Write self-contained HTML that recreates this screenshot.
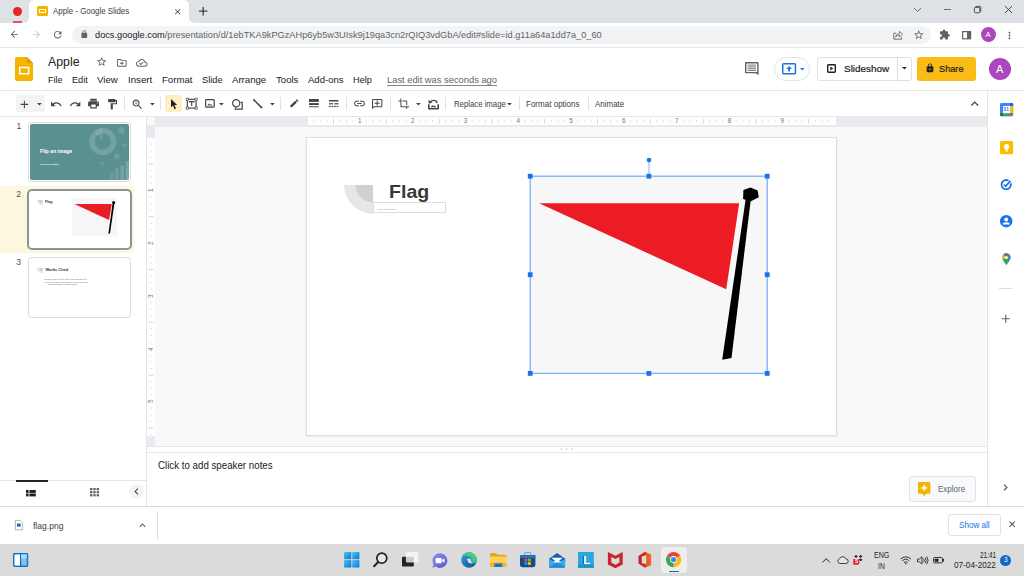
<!DOCTYPE html>
<html><head><meta charset="utf-8"><title>Apple - Google Slides</title>
<style>
*{box-sizing:border-box;margin:0;padding:0}
html,body{width:1024px;height:576px;overflow:hidden;background:#fff;font-family:"Liberation Sans",sans-serif;color:#202124}
.a{position:absolute}
.t{position:absolute;white-space:nowrap;line-height:1}
svg{position:absolute;overflow:visible}
</style></head><body>
<!-- browser tab strip -->
<div class="a" style="left:0px;top:0px;width:1024px;height:23px;background:#dee1e6;"></div>
<svg style="left:0px;top:0px;" width="1024" height="23" viewBox="0 0 1024 23"><path d="M22.5,23 Q29,23 29,17 L29,6 Q29,0 35,0 L183,0 Q189,0 189,6 L189,17 Q189,23 195.5,23 Z" fill="#fff"/></svg>
<div class="a" style="left:12.8px;top:6.5px;width:9.4px;height:9.4px;background:#e0291c;border-radius:50%"></div>
<div class="a" style="left:13px;top:21px;width:9px;height:2px;background:#e8505b;"></div>
<div class="a" style="left:37px;top:5.8px;width:10.6px;height:10.6px;background:#f4b400;border-radius:1.6px"></div>
<div class="a" style="left:39px;top:8.7px;width:6.8px;height:4.8px;background:transparent;border:1.4px solid #fff"></div>
<div class="t" style="left:52.80px;top:7.20px;font-size:8.6px;color:#3c4043;transform:scaleX(0.9160);transform-origin:0 0;">Apple - Google Slides</div>
<svg style="left:173.2px;top:6.8px;" width="9.4" height="9.4" viewBox="0 0 24 24"><path d="M19 6.410L17.590 5 12 10.590 6.410 5 5 6.410 10.590 12 5 17.590 6.410 19 12 13.410 17.590 19 19 17.590 13.410 12z" fill="#3c4043"/></svg>
<svg style="left:199px;top:7.3px;" width="8.4" height="8.4" viewBox="0 0 8.4 8.4"><path d="M4.2,0 V8.4 M0,4.2 H8.4" stroke="#3c4043" stroke-width="1.3" fill="none"/></svg>
<svg style="left:913.7px;top:8px;" width="7" height="4" viewBox="0 0 7 4"><path d="M0,0 L3.5,3.5 L7,0" stroke="#5f6368" stroke-width="0.9" fill="none"/></svg>
<svg style="left:944px;top:9.4px;" width="7" height="1" viewBox="0 0 7 1"><path d="M0,0.5 H7" stroke="#5f6368" stroke-width="0.9"/></svg>
<svg style="left:974.4px;top:6.3px;" width="7.2" height="7.2" viewBox="0 0 7.2 7.2"><rect x="0.4" y="1.4" width="5.4" height="5.4" rx="1" stroke="#3c4043" stroke-width="0.9" fill="none"/><path d="M1.6,1.4 V1.2 Q1.6,0.4 2.4,0.4 H5.8 Q6.8,0.4 6.8,1.4 V4.8 Q6.8,5.6 6,5.6" stroke="#3c4043" stroke-width="0.9" fill="none"/></svg>
<svg style="left:1005.2px;top:6.3px;" width="7" height="7" viewBox="0 0 7 7"><path d="M0,0 L7,7 M7,0 L0,7" stroke="#3c4043" stroke-width="0.9" fill="none"/></svg>
<!-- address bar -->
<div class="a" style="left:0px;top:23px;width:1024px;height:24.5px;background:#fff;border-bottom:1px solid #e3e5e8"></div>
<svg style="left:9.2px;top:29.1px;" width="10.8" height="10.8" viewBox="0 0 24 24"><path d="M20 11H7.830l5.590-5.590L12 4l-8 8 8 8 1.410-1.410L7.830 13H20v-2z" fill="#5f6368"/></svg>
<svg style="left:30.6px;top:29.1px;" width="10.8" height="10.8" viewBox="0 0 24 24"><path d="M12 4l-1.410 1.410L16.170 11H4v2h12.170l-5.580 5.590L12 20l8-8z" fill="#c4c7cb"/></svg>
<svg style="left:51.8px;top:28.9px;" width="11.4" height="11.4" viewBox="0 0 24 24"><path d="M17.650 6.350C16.200 4.900 14.210 4 12 4c-4.420 0-7.990 3.580-7.990 8s3.570 8 7.990 8c3.730 0 6.840-2.550 7.730-6h-2.080c-.820 2.330-3.040 4-5.650 4-3.310 0-6-2.690-6-6s2.690-6 6-6c1.660 0 3.140.690 4.220 1.780L13 11h7V4l-2.350 2.350z" fill="#5f6368"/></svg>
<div class="a" style="left:72px;top:26px;width:858.5px;height:18px;background:#f1f3f4;border-radius:9px"></div>
<svg style="left:79.7px;top:30.3px;" width="8.6" height="8.6" viewBox="0 0 24 24"><path d="M18 8h-1V6c0-2.760-2.240-5-5-5S7 3.240 7 6v2H6c-1.100 0-2 .900-2 2v10c0 1.100.900 2 2 2h12c1.100 0 2-.900 2-2V10c0-1.100-.900-2-2-2zm-2.900 0H8.900V6c0-1.710 1.390-3.100 3.100-3.100 1.710 0 3.100 1.390 3.100 3.100v2z" fill="#5f6368"/></svg>
<div class="t" style="left:94.60px;top:30.11px;font-size:9.8px;color:#202124;transform:scaleX(0.9415);transform-origin:0 0;">docs.google.com<span style="color:#5f6368">/presentation/d/1ebTKA9kPGzAHp6yb5w3UIsk9j19qa3cn2rQIQ3vdGbA/edit#slide=id.g11a64a1dd7a_0_60</span></div>
<svg style="left:892.5px;top:30px;" width="10" height="10" viewBox="0 0 10 10"><path d="M3.2,3.2 H0.8 V9.2 H8.4 V7" stroke="#5f6368" stroke-width="0.9" fill="none"/><path d="M2.6,7.2 Q3,3.6 6.4,3.4 V1.4 L9.6,4.2 L6.4,7 V5 Q4,5 2.6,7.2 Z" stroke="#5f6368" stroke-width="0.8" fill="none" stroke-linejoin="round"/></svg>
<svg style="left:912.7px;top:29.2px;" width="11.6" height="11.6" viewBox="0 0 24 24"><path d="M22 9.24l-7.19-.62L12 2 9.190 8.630 2 9.24l5.46 4.73L5.820 21 12 17.27 18.180 21l-1.63-7.03L22 9.240zM12 15.4l-3.760 2.270 1-4.28-3.32-2.88 4.38-.38L12 6.100l1.710 4.040 4.380.380-3.320 2.880 1 4.280L12 15.400z" fill="#5f6368"/></svg>
<svg style="left:939.3px;top:29.3px;" width="11.4" height="11.4" viewBox="0 0 24 24"><path d="M20.500 11H19V7c0-1.100-.900-2-2-2h-4V3.500C13 2.120 11.880 1 10.500 1S8 2.120 8 3.500V5H4c-1.100 0-1.990.900-1.990 2v3.800H3.500c1.490 0 2.700 1.210 2.700 2.700s-1.210 2.700-2.700 2.700H2V20c0 1.100.900 2 2 2h3.800v-1.500c0-1.490 1.210-2.700 2.700-2.700 1.490 0 2.700 1.210 2.700 2.700V22H17c1.100 0 2-.900 2-2v-4h1.500c1.380 0 2.500-1.120 2.500-2.500S21.880 11 20.500 11z" fill="#5f6368"/></svg>
<svg style="left:961.8px;top:30.8px;" width="9.2" height="8.4" viewBox="0 0 9.2 8.4"><rect x="0.6" y="0.6" width="8" height="7.2" stroke="#5f6368" stroke-width="1.2" fill="none"/><rect x="5" y="0.6" width="3.6" height="7.2" fill="#5f6368"/></svg>
<div class="a" style="left:980.8px;top:27.1px;width:15px;height:15px;background:#ab47bc;border-radius:50%"></div>
<div class="t" style="left:985.60px;top:30.89px;font-size:7.8px;color:#fff;">A</div>
<svg style="left:1003.9px;top:29.5px;" width="11" height="11" viewBox="0 0 24 24"><path d="M12 8c1.100 0 2-.900 2-2s-.900-2-2-2-2 .900-2 2 .900 2 2 2zm0 2c-1.100 0-2 .900-2 2s.900 2 2 2 2-.900 2-2-.900-2-2-2zm0 6c-1.100 0-2 .900-2 2s.900 2 2 2 2-.900 2-2-.900-2-2-2z" fill="#5f6368"/></svg>
<!-- slides header -->
<div class="a" style="left:0px;top:48px;width:1024px;height:43px;background:#fff;border-bottom:1px solid #e3e5e8"></div>
<svg style="left:15px;top:56.7px;" width="18" height="24" viewBox="0 0 18 24"><path d="M1.8,0 H12 L18,6 V22.2 Q18,24 16.2,24 H1.8 Q0,24 0,22.2 V1.8 Q0,0 1.8,0 Z" fill="#f4b400"/><path d="M12,0 L18,6 H13.5 Q12,6 12,4.5 Z" fill="#e09e00"/><rect x="4.7" y="10.5" width="9" height="6.2" fill="none" stroke="#fff" stroke-width="1.5"/></svg>
<div class="t" style="left:48.30px;top:55.35px;font-size:13.2px;color:#202124;transform:scaleX(0.9330);transform-origin:0 0;">Apple</div>
<svg style="left:96.1px;top:56.4px;" width="11.4" height="11.4" viewBox="0 0 24 24"><path d="M22 9.24l-7.19-.62L12 2 9.190 8.630 2 9.24l5.46 4.73L5.820 21 12 17.27 18.180 21l-1.63-7.03L22 9.240zM12 15.4l-3.760 2.270 1-4.28-3.32-2.88 4.38-.38L12 6.100l1.710 4.040 4.380.380-3.320 2.880 1 4.280L12 15.400z" fill="#5f6368"/></svg>
<svg style="left:116.0px;top:56.6px;" width="11.6" height="11.6" viewBox="0 0 24 24"><path d="M20 6h-8l-2-2H4c-1.100 0-2 .900-2 2v12c0 1.100.900 2 2 2h16c1.100 0 2-.900 2-2V8c0-1.100-.900-2-2-2zm0 12H4V6h5.170l2 2H20v10zm-8-1l4-4-4-4v3H8v2h4z" fill="#5f6368"/></svg>
<svg style="left:136.3px;top:56.7px;" width="11.6" height="11.6" viewBox="0 0 24 24"><path d="M19.350 10.040C18.670 6.590 15.640 4 12 4 9.110 4 6.600 5.640 5.350 8.040 2.340 8.360 0 10.910 0 14c0 3.310 2.690 6 6 6h13c2.760 0 5-2.240 5-5 0-2.640-2.050-4.780-4.650-4.960zM19 18H6c-2.210 0-4-1.790-4-4s1.790-4 4-4h.710C7.370 7.690 9.480 6 12 6c3.040 0 5.500 2.460 5.500 5.500v.500H19c1.660 0 3 1.340 3 3s-1.340 3-3 3zm-9-3.820l-2.090-2.090L6.500 13.500 10 17l6.010-6.010-1.410-1.410z" fill="#5f6368"/></svg>
<div class="t" style="left:47.80px;top:75.41px;font-size:9.8px;color:#202124;transform:scaleX(0.9119);transform-origin:0 0;">File</div>
<div class="t" style="left:72.20px;top:75.41px;font-size:9.8px;color:#202124;transform:scaleX(0.9356);transform-origin:0 0;">Edit</div>
<div class="t" style="left:97.40px;top:75.41px;font-size:9.8px;color:#202124;transform:scaleX(0.9874);transform-origin:0 0;">View</div>
<div class="t" style="left:127.70px;top:75.41px;font-size:9.8px;color:#202124;transform:scaleX(0.9914);transform-origin:0 0;">Insert</div>
<div class="t" style="left:161.80px;top:75.41px;font-size:9.8px;color:#202124;transform:scaleX(0.9795);transform-origin:0 0;">Format</div>
<div class="t" style="left:201.60px;top:75.41px;font-size:9.8px;color:#202124;transform:scaleX(0.9453);transform-origin:0 0;">Slide</div>
<div class="t" style="left:231.80px;top:75.41px;font-size:9.8px;color:#202124;transform:scaleX(0.9809);transform-origin:0 0;">Arrange</div>
<div class="t" style="left:275.60px;top:75.41px;font-size:9.8px;color:#202124;transform:scaleX(0.9791);transform-origin:0 0;">Tools</div>
<div class="t" style="left:307.60px;top:75.41px;font-size:9.8px;color:#202124;transform:scaleX(0.9753);transform-origin:0 0;">Add-ons</div>
<div class="t" style="left:352.80px;top:75.41px;font-size:9.8px;color:#202124;transform:scaleX(0.9427);transform-origin:0 0;">Help</div>
<div class="t" style="left:386.60px;top:75.41px;font-size:9.8px;color:#5f6368;transform:scaleX(0.9524);transform-origin:0 0;text-decoration:underline;text-decoration-thickness:0.6px;text-decoration-color:#80868b;text-underline-offset:1.5px">Last edit was seconds ago</div>
<svg style="left:745.2px;top:61.6px;" width="13.6" height="13" viewBox="0 0 13.6 13"><path d="M0.7,0.7 H12.9 V10.6 H0.7 Z" fill="#fff" stroke="#5f6368" stroke-width="1.4" stroke-linejoin="round"/><path d="M10.4,11 H13.6 V13 Z" fill="#5f6368"/><path d="M2.6,3.1 H11 M2.6,4.9 H11 M2.6,6.7 H11 M2.6,8.4 H11" stroke="#6f7377" stroke-width="0.95"/></svg>
<div class="a" style="left:774.2px;top:57.2px;width:35.6px;height:23.4px;background:#fff;border:1px solid #e0e3e7;border-radius:12px"></div>
<svg style="left:781.7px;top:63.2px;" width="14.2" height="11.4" viewBox="0 0 14.2 11.4"><rect x="0.75" y="0.75" width="12.7" height="9.9" rx="0.9" stroke="#1a73e8" stroke-width="1.5" fill="none"/><path d="M7.1,2.9 L10,6 H8 V8.4 H6.2 V6 H4.2 Z" fill="#1a73e8"/></svg>
<svg style="left:800px;top:67.8px;" width="4.8" height="2.7" viewBox="0 0 4.8 2.7"><path d="M0,0 H4.6 L2.3,2.6 Z" fill="#1a73e8"/></svg>
<div class="a" style="left:817.4px;top:57.2px;width:94.6px;height:23.4px;background:#fff;border:1px solid #dfe1e5;border-radius:3px"></div>
<div class="a" style="left:897px;top:57.2px;width:1px;height:23.4px;background:#dadce0;"></div>
<svg style="left:827.2px;top:63.7px;" width="9" height="9" viewBox="0 0 9 9"><rect x="0.7" y="0.7" width="7.6" height="7.6" rx="0.7" stroke="#202124" stroke-width="1.4" fill="none"/><path d="M3.3,2.6 L6.3,4.5 L3.3,6.4 Z" fill="#202124"/></svg>
<div class="t" style="left:844.40px;top:63.66px;font-size:9.9px;color:#202124;transform:scaleX(1.0060);transform-origin:0 0;-webkit-text-stroke:0.2px #202124">Slideshow</div>
<svg style="left:901.8px;top:67.4px;" width="4.8" height="2.6" viewBox="0 0 4.8 2.6"><path d="M0,0 H4.8 L2.4,2.6 Z" fill="#202124"/></svg>
<div class="a" style="left:917.4px;top:57.2px;width:58.8px;height:23.4px;background:#f9bb16;border-radius:3px"></div>
<svg style="left:925.0px;top:63.0px;" width="10" height="10" viewBox="0 0 24 24"><path d="M18 8h-1V6c0-2.760-2.240-5-5-5S7 3.240 7 6v2H6c-1.100 0-2 .900-2 2v10c0 1.100.900 2 2 2h12c1.100 0 2-.900 2-2V10c0-1.100-.900-2-2-2zm-6 9c-1.100 0-2-.900-2-2s.900-2 2-2 2 .900 2 2-.900 2-2 2zm3.100-9H8.900V6c0-1.710 1.390-3.100 3.100-3.100 1.710 0 3.100 1.390 3.100 3.100v2z" fill="#202124"/></svg>
<div class="t" style="left:939.40px;top:63.66px;font-size:9.9px;color:#202124;transform:scaleX(0.9311);transform-origin:0 0;-webkit-text-stroke:0.2px #202124">Share</div>
<div class="a" style="left:988.7px;top:58.3px;width:22px;height:22px;background:#ab47bc;border-radius:50%"></div>
<div class="t" style="left:995.90px;top:64.03px;font-size:11px;color:#fff;">A</div>
<!-- toolbar -->
<div class="a" style="left:0px;top:91px;width:987px;height:26px;background:#fff;border-bottom:1px solid #e6e8ea"></div>
<div class="a" style="left:15.6px;top:94.8px;width:29.4px;height:17px;background:#f1f3f4;border-radius:2px"></div>
<svg style="left:18.2px;top:97.5px;" width="12.8" height="12.8" viewBox="0 0 24 24"><path d="M19 13h-6v6h-2v-6H5v-2h6V5h2v6h6v2z" fill="#444746"/></svg>
<svg style="left:37.1px;top:102.7px;" width="4.8" height="2.6" viewBox="0 0 4.8 2.6"><path d="M0,0 H4.8 L2.4,2.6 Z" fill="#444746"/></svg>
<svg style="left:49.7px;top:97.8px;" width="12.4" height="12.4" viewBox="0 0 24 24"><path d="M12.5 8c-2.65 0-5.05.99-6.9 2.6L2 7v9h9l-3.62-3.62c1.39-1.16 3.16-1.88 5.12-1.88 3.54 0 6.55 2.31 7.6 5.5l2.37-.78C21.08 11.03 17.15 8 12.5 8z" fill="#444746"/></svg>
<svg style="left:69.0px;top:97.8px;" width="12.4" height="12.4" viewBox="0 0 24 24"><path d="M18.4 10.6C16.55 8.99 14.15 8 11.5 8c-4.65 0-8.58 3.03-9.96 7.22L3.9 16c1.05-3.19 4.05-5.5 7.6-5.5 1.95 0 3.73.72 5.12 1.88L13 16h9V7l-3.6 3.6z" fill="#444746"/></svg>
<svg style="left:87.0px;top:97.2px;" width="13" height="13" viewBox="0 0 24 24"><path d="M19 8H5c-1.66 0-3 1.34-3 3v6h4v4h12v-4h4v-6c0-1.66-1.34-3-3-3zm-3 11H8v-5h8v5zm3-7c-.55 0-1-.45-1-1s.45-1 1-1 1 .45 1 1-.45 1-1 1zm-1-9H6v4h12V3z" fill="#444746"/></svg>
<svg style="left:106.1px;top:97.6px;" width="12.6" height="12.6" viewBox="0 0 24 24"><path d="M18 4V3c0-.55-.45-1-1-1H5c-.55 0-1 .45-1 1v4c0 .55.45 1 1 1h12c.55 0 1-.45 1-1V6h1v4H9v11c0 .55.45 1 1 1h2c.55 0 1-.45 1-1v-9h8V4h-3z" fill="#444746"/></svg>
<div class="a" style="left:123.9px;top:97.4px;width:1px;height:12.6px;background:#dfe1e5;"></div>
<svg style="left:130.8px;top:97.7px;" width="12.8" height="12.8" viewBox="0 0 24 24"><path d="M15.5 14h-.79l-.28-.27C15.41 12.59 16 11.11 16 9.5 16 5.91 13.09 3 9.5 3S3 5.91 3 9.5 5.91 16 9.5 16c1.61 0 3.09-.59 4.23-1.57l.27.28v.79l5 4.99L20.49 19l-4.99-5zm-6 0C7.01 14 5 11.99 5 9.5S7.01 5 9.5 5 14 7.01 14 9.5 11.99 14 9.5 14zm2.500-4h-2v2H9v-2H7V9h2V7h1v2h2v1z" fill="#444746"/></svg>
<svg style="left:149.6px;top:102.7px;" width="4.8" height="2.6" viewBox="0 0 4.8 2.6"><path d="M0,0 H4.8 L2.4,2.6 Z" fill="#444746"/></svg>
<div class="a" style="left:160.2px;top:97.4px;width:1px;height:12.6px;background:#dfe1e5;"></div>
<div class="a" style="left:165px;top:94.8px;width:17.2px;height:17px;background:#feefc3;border-radius:2px"></div>
<svg style="left:170.6px;top:98.9px;" width="6.6" height="10.4" viewBox="0 0 6.6 10.4"><path d="M0,0 V8.4 L2,6.6 L3.5,10.2 L5,9.6 L3.5,6.1 H6.2 Z" fill="#202124"/></svg>
<svg style="left:186.4px;top:98.30000000000001px;" width="11.4" height="11.4" viewBox="0 0 11.4 11.4"><rect x="1.3" y="1.3" width="8.8" height="8.800" stroke="#444746" stroke-width="1.15" fill="none"/><rect x="0.2" y="0.2" width="2.2" height="2.2" fill="#fff" stroke="#444746" stroke-width="0.7"/><rect x="9" y="0.2" width="2.2" height="2.2" fill="#fff" stroke="#444746" stroke-width="0.7"/><rect x="0.2" y="9" width="2.2" height="2.2" fill="#fff" stroke="#444746" stroke-width="0.7"/><rect x="9" y="9" width="2.2" height="2.2" fill="#fff" stroke="#444746" stroke-width="0.7"/><path d="M3.5,4.6 V3.6 H7.9 V4.6 M5.7,3.6 V8" stroke="#444746" stroke-width="1.15" fill="none"/></svg>
<svg style="left:205.4px;top:99.4px;" width="9.8" height="8.8" viewBox="0 0 9.8 8.8"><rect x="0.6" y="0.6" width="8.6" height="7.6" rx="0.9" stroke="#444746" stroke-width="1.2" fill="none"/><path d="M2.2,6.6 L3.9,4.5 L5.1,5.9 L6,5 L7.6,6.6 Z" fill="#444746"/></svg>
<svg style="left:219.0px;top:102.7px;" width="4.8" height="2.6" viewBox="0 0 4.8 2.6"><path d="M0,0 H4.8 L2.4,2.6 Z" fill="#444746"/></svg>
<svg style="left:231.6px;top:98.5px;" width="10.8" height="10.8" viewBox="0 0 10.8 10.8"><circle cx="4.2" cy="4.2" r="3.6" stroke="#444746" stroke-width="1.2" fill="none"/><path d="M8.6,3.4 H10.2 V10.2 H3.4 V8.6" stroke="#444746" stroke-width="1.2" fill="none"/></svg>
<svg style="left:252.6px;top:99.2px;" width="9.4" height="9.4" viewBox="0 0 9.4 9.4"><path d="M1,1 L8.4,8.4" stroke="#444746" stroke-width="1.5"/><circle cx="1" cy="1" r="1" fill="#444746"/><circle cx="8.4" cy="8.4" r="1" fill="#444746"/></svg>
<svg style="left:269.8px;top:102.7px;" width="4.8" height="2.6" viewBox="0 0 4.8 2.6"><path d="M0,0 H4.8 L2.4,2.6 Z" fill="#444746"/></svg>
<div class="a" style="left:280.3px;top:97.4px;width:1px;height:12.6px;background:#dfe1e5;"></div>
<svg style="left:289.1px;top:97.7px;" width="10.6" height="10.6" viewBox="0 0 24 24"><path d="M3 17.25V21h3.75L17.81 9.94l-3.75-3.75L3 17.25zM20.71 7.04c.39-.39.39-1.02 0-1.41l-2.34-2.34c-.39-.39-1.02-.39-1.41 0l-1.83 1.83 3.75 3.75 1.83-1.830z" fill="#444746"/></svg>
<svg style="left:309px;top:99.4px;" width="9.8" height="8.4" viewBox="0 0 9.8 8.4"><rect x="0" y="0" width="9.8" height="2.9" fill="#444746"/><rect x="0" y="4.1" width="9.8" height="1.9" fill="#444746"/><rect x="0" y="7.3" width="9.8" height="1" fill="#444746"/></svg>
<svg style="left:328.7px;top:99.9px;" width="9.4" height="7.2" viewBox="0 0 9.4 7.2"><rect x="0" y="0" width="9.4" height="1.5" fill="#444746"/><rect x="0" y="3.2" width="4" height="1.2" fill="#444746"/><rect x="5.4" y="3.2" width="4" height="1.2" fill="#444746"/><rect x="0" y="5.9" width="1.7" height="1.2" fill="#444746"/><rect x="2.55" y="5.9" width="1.7" height="1.2" fill="#444746"/><rect x="5.1" y="5.9" width="1.7" height="1.2" fill="#444746"/><rect x="7.65" y="5.9" width="1.7" height="1.2" fill="#444746"/></svg>
<div class="a" style="left:346.1px;top:97.4px;width:1px;height:12.6px;background:#dfe1e5;"></div>
<svg style="left:352.6px;top:97.4px;" width="13" height="13" viewBox="0 0 24 24"><path d="M3.9 12c0-1.71 1.39-3.1 3.1-3.1h4V7H7c-2.76 0-5 2.24-5 5s2.24 5 5 5h4v-1.900H7c-1.71 0-3.1-1.39-3.1-3.1zM8 13h8v-2H8v2zm9-6h-4v1.9h4c1.71 0 3.1 1.39 3.1 3.1s-1.39 3.1-3.1 3.100h-4V17h4c2.76 0 5-2.24 5-5s-2.24-5-5-5z" fill="#444746"/></svg>
<svg style="left:371.4px;top:98.0px;" width="12.4" height="12.4" viewBox="0 0 24 24"><path d="M22 4c0-1.100-.900-2-2-2H4c-1.100 0-2 .900-2 2v12c0 1.100.900 2 2 2h14l4 4V4zm-2 13.170L18.830 16H4V4h16v13.170zM13 5h-2v4H7v2h4v4h2v-4h4V9h-4z" fill="#444746" transform="translate(24,0) scale(-1,1)"/></svg>
<div class="a" style="left:390.3px;top:97.4px;width:1px;height:12.6px;background:#dfe1e5;"></div>
<svg style="left:397.6px;top:97.9px;" width="11.6" height="11.6" viewBox="0 0 24 24"><path d="M17 15h2V7c0-1.1-.9-2-2-2H9v2h8v8zM7 17V1H5v4H1v2h4v10c0 1.1.9 2 2 2h10v4h2v-4h4v-2H7z" fill="#444746"/></svg>
<svg style="left:415.90000000000003px;top:102.7px;" width="4.8" height="2.6" viewBox="0 0 4.8 2.6"><path d="M0,0 H4.8 L2.4,2.6 Z" fill="#444746"/></svg>
<svg style="left:428px;top:98.60000000000001px;" width="11" height="10.6" viewBox="0 0 11 10.6"><path d="M0.8,5.2 V9.8 H10.2 V5.2" stroke="#444746" stroke-width="1.6" fill="none" stroke-linejoin="round"/><path d="M2.6,8.2 L4.3,6 L5.5,7.4 L6.7,6.2 L8.4,8.2 Z" fill="#444746"/><path d="M2,3.600 A3.800,3.500 0 0 1 9.200,4" stroke="#444746" stroke-width="1.4" fill="none"/><path d="M0.2,1 L1,4.800 L4.400,3.400 Z" fill="#444746"/></svg>
<div class="a" style="left:445.1px;top:97.4px;width:1px;height:12.6px;background:#dfe1e5;"></div>
<div class="t" style="left:453.80px;top:99.80px;font-size:8.6px;color:#3c4043;transform:scaleX(0.9030);transform-origin:0 0;">Replace image</div>
<svg style="left:507.3px;top:102.7px;" width="4.8" height="2.6" viewBox="0 0 4.8 2.6"><path d="M0,0 H4.8 L2.4,2.6 Z" fill="#444746"/></svg>
<div class="a" style="left:518.9px;top:97.4px;width:1px;height:12.6px;background:#dfe1e5;"></div>
<div class="t" style="left:526.40px;top:99.80px;font-size:8.6px;color:#3c4043;transform:scaleX(0.9345);transform-origin:0 0;">Format options</div>
<div class="a" style="left:587.5px;top:97.4px;width:1px;height:12.6px;background:#dfe1e5;"></div>
<div class="t" style="left:595.00px;top:99.80px;font-size:8.6px;color:#3c4043;transform:scaleX(0.9287);transform-origin:0 0;">Animate</div>
<svg style="left:966.65px;top:95.85px;" width="15.5" height="15.5" viewBox="0 0 24 24"><path d="M12 8l-6 6 1.410 1.410L12 10.830l4.590 4.580L18 14z" fill="#444746"/></svg>
<!-- filmstrip -->
<div class="a" style="left:0px;top:117px;width:146.8px;height:389px;background:#fff;border-right:1px solid #e3e5e8"></div>
<div class="a" style="left:0px;top:186.4px;width:134px;height:66.4px;background:#fef7e0;border-radius:0 3px 3px 0"></div>
<div class="t" style="left:16.60px;top:122.40px;font-size:8.6px;color:#4d5156;">1</div>
<div class="t" style="left:16.20px;top:190.30px;font-size:8.6px;color:#4d5156;">2</div>
<div class="t" style="left:16.20px;top:258.10px;font-size:8.6px;color:#4d5156;">3</div>
<div class="a" style="left:28.2px;top:121.5px;width:102.8px;height:60px;background:#fff;border:1px solid #dadce0;border-radius:3.5px"></div>
<div class="a" style="left:30px;top:123.6px;width:99.2px;height:56px;background:#5a908f;border-radius:2px;overflow:hidden"></div>
<svg style="left:30px;top:123.6px;" width="99.2" height="56" viewBox="0 0 99.2 56"><g fill="#fff"><circle cx="72.8" cy="17.6" r="10.9" fill="none" stroke="#fff" stroke-opacity="0.16" stroke-width="5.6"/><path d="M64.4,9 A12,12 0 0 1 72.8,4 V9.6 A8.2,8.2 0 0 0 67,12 Z" fill-opacity="0.10"/><path d="M72.8,17.6 L67.6,11.6 A8,8 0 0 1 72.8,9.6 Z" fill-opacity="0.10"/><circle cx="91.6" cy="6.4" r="3.3" fill-opacity="0.13"/><circle cx="94.5" cy="21.6" r="2" fill-opacity="0.13"/><circle cx="86.9" cy="32.6" r="3" fill-opacity="0.13"/><circle cx="72.3" cy="39.4" r="1.7" fill-opacity="0.13"/><rect x="80.2" y="48.4" width="3.2" height="7.6" fill-opacity="0.13"/><rect x="85.4" y="44.4" width="3.2" height="11.6" fill-opacity="0.15"/><rect x="90.4" y="41.4" width="3.6" height="14.6" fill-opacity="0.17"/><rect x="95.6" y="37.4" width="3.6" height="18.6" fill-opacity="0.19"/></g></svg>
<div class="t" style="left:39.80px;top:148.86px;font-size:5.4px;color:#fff;transform:scaleX(0.9331);transform-origin:0 0;font-weight:700;">Flip an image</div>
<div class="t" style="left:39.80px;top:164.38px;font-size:2.5px;color:#fff;transform:scaleX(0.8600);transform-origin:0 0;font-weight:700;">Flip a/click images</div>
<div class="a" style="left:27.2px;top:188.8px;width:104.6px;height:61.3px;background:#fff;border:2px solid #8f949a;border-radius:5px"></div>
<svg style="left:37px;top:200px;" width="6" height="5.4" viewBox="0 0 6 5.4"><path d="M0,0 H5.6 V5.2 A5.6,5.2 0 0 1 0,0 Z" fill="#e4e4e4"/><path d="M2.2,0 H5.6 V3.2 A3.4,3.2 0 0 1 2.2,0 Z" fill="#cfd1d0"/></svg>
<div class="t" style="left:45.40px;top:199.59px;font-size:3.9px;color:#333;transform:scaleX(0.9480);transform-origin:0 0;font-weight:700;">Flag</div>
<div class="a" style="left:71.9px;top:198.4px;width:45px;height:37.4px;background:#f6f6f6;"></div>
<svg style="left:71.9px;top:199px;" width="45" height="37.4" viewBox="0 0 45 37.4"><path d="M2.3,5 H39.8 L37,21.1 Z" fill="#ec1c24"/><path d="M40.6,4.2 L42.4,4.2 L38,34.4 L36.4,34.5 Z" fill="#000"/><circle cx="41.6" cy="3.6" r="1.5" fill="#000"/></svg>
<div class="a" style="left:28.2px;top:257.1px;width:102.8px;height:60.6px;background:#fff;border:1px solid #dadce0;border-radius:3.5px"></div>
<svg style="left:37px;top:267.8px;" width="6" height="5.4" viewBox="0 0 6 5.4"><path d="M0,0 H5.6 V5.2 A5.6,5.2 0 0 1 0,0 Z" fill="#e4e4e4"/><path d="M2.2,0 H5.6 V3.2 A3.4,3.2 0 0 1 2.2,0 Z" fill="#cfd1d0"/></svg>
<div class="t" style="left:45.40px;top:267.69px;font-size:3.9px;color:#333;font-weight:700;">Works Cited</div>
<div class="t" style="left:43.80px;top:278.52px;font-size:1.6px;color:#666;transform:scaleX(0.9499);transform-origin:0 0;">Flag image. Image by Google, Google Slides, www.google.com.</div>
<div class="t" style="left:43.80px;top:281.82px;font-size:1.6px;color:#666;transform:scaleX(0.9201);transform-origin:0 0;">“How to Flip an Image in Google Slides.” Flip an Image Guide, 2022,</div>
<div class="t" style="left:48.40px;top:284.02px;font-size:1.6px;color:#666;transform:scaleX(1.1761);transform-origin:0 0;">www.flipanimage.xyz/google-slides.</div>
<div class="a" style="left:0px;top:480px;width:146.5px;height:1px;background:#e3e5e8;"></div>
<div class="a" style="left:16px;top:480px;width:32.2px;height:1.6px;background:#202124;"></div>
<svg style="left:26px;top:489.6px;" width="10" height="6.4" viewBox="0 0 10 6.4"><rect x="0" y="0" width="2.6" height="2.9" fill="#202124"/><rect x="3.4" y="0" width="6.4" height="2.9" fill="#202124"/><rect x="0" y="3.5" width="2.6" height="2.9" fill="#202124"/><rect x="3.4" y="3.5" width="6.4" height="2.9" fill="#202124"/></svg>
<svg style="left:90.4px;top:488.4px;" width="9" height="8.4" viewBox="0 0 9 8.4"><g fill="#5f6368"><rect x="0" y="0" width="2.4" height="2.2"/><rect x="3.3" y="0" width="2.4" height="2.2"/><rect x="6.6" y="0" width="2.4" height="2.2"/><rect x="0" y="3.1" width="2.4" height="2.2"/><rect x="3.3" y="3.1" width="2.4" height="2.2"/><rect x="6.6" y="3.1" width="2.4" height="2.2"/><rect x="0" y="6.2" width="2.4" height="2.2"/><rect x="3.3" y="6.2" width="2.4" height="2.2"/><rect x="6.6" y="6.2" width="2.4" height="2.2"/></g></svg>
<div class="a" style="left:128.8px;top:484.2px;width:15.2px;height:15.2px;background:#f1f3f4;border-radius:50%"></div>
<svg style="left:129.7px;top:485.3px;" width="13" height="13" viewBox="0 0 24 24"><path d="M15.410 7.410L14 6l-6 6 6 6 1.410-1.410L10.830 12z" fill="#444746"/></svg>
<!-- editor canvas + rulers -->
<div class="a" style="left:147px;top:117px;width:840px;height:329.4px;background:#f8f9fa;"></div>
<div class="a" style="left:155.4px;top:116.6px;width:831.6px;height:10.2px;background:#e8eaed;"></div>
<div class="a" style="left:308px;top:117.4px;width:528px;height:7.6px;background:#fff;"></div>
<div class="a" style="left:146.8px;top:117px;width:8.6px;height:329.4px;background:#e8eaed;"></div>
<div class="a" style="left:147.2px;top:117px;width:7.8px;height:7.8px;background:#f8f9fa;"></div>
<div class="a" style="left:147.2px;top:137.6px;width:8px;height:298.4px;background:#fff;"></div>
<svg style="left:0px;top:0px;" width="1024" height="576" viewBox="0 0 1024 576"><rect x="313.25" y="120" width="0.9" height="2.2" fill="#dcdee1"/><rect x="319.85" y="120" width="0.9" height="2.2" fill="#dcdee1"/><rect x="326.45" y="120" width="0.9" height="2.2" fill="#dcdee1"/><rect x="333.05" y="118.8" width="0.9" height="5" fill="#cdd0d4"/><rect x="339.65" y="120" width="0.9" height="2.2" fill="#dcdee1"/><rect x="346.25" y="120" width="0.9" height="2.2" fill="#dcdee1"/><rect x="352.85" y="120" width="0.9" height="2.2" fill="#dcdee1"/><rect x="366.05" y="120" width="0.9" height="2.2" fill="#dcdee1"/><rect x="372.65" y="120" width="0.9" height="2.2" fill="#dcdee1"/><rect x="379.25" y="120" width="0.9" height="2.2" fill="#dcdee1"/><rect x="385.85" y="118.8" width="0.9" height="5" fill="#cdd0d4"/><rect x="392.45" y="120" width="0.9" height="2.2" fill="#dcdee1"/><rect x="399.05" y="120" width="0.9" height="2.2" fill="#dcdee1"/><rect x="405.65" y="120" width="0.9" height="2.2" fill="#dcdee1"/><rect x="418.85" y="120" width="0.9" height="2.2" fill="#dcdee1"/><rect x="425.45" y="120" width="0.9" height="2.2" fill="#dcdee1"/><rect x="432.05" y="120" width="0.9" height="2.2" fill="#dcdee1"/><rect x="438.65" y="118.8" width="0.9" height="5" fill="#cdd0d4"/><rect x="445.25" y="120" width="0.9" height="2.2" fill="#dcdee1"/><rect x="451.85" y="120" width="0.9" height="2.2" fill="#dcdee1"/><rect x="458.45" y="120" width="0.9" height="2.2" fill="#dcdee1"/><rect x="471.65" y="120" width="0.9" height="2.2" fill="#dcdee1"/><rect x="478.25" y="120" width="0.9" height="2.2" fill="#dcdee1"/><rect x="484.85" y="120" width="0.9" height="2.2" fill="#dcdee1"/><rect x="491.45" y="118.8" width="0.9" height="5" fill="#cdd0d4"/><rect x="498.05" y="120" width="0.9" height="2.2" fill="#dcdee1"/><rect x="504.65" y="120" width="0.9" height="2.2" fill="#dcdee1"/><rect x="511.25" y="120" width="0.9" height="2.2" fill="#dcdee1"/><rect x="524.45" y="120" width="0.9" height="2.2" fill="#dcdee1"/><rect x="531.05" y="120" width="0.9" height="2.2" fill="#dcdee1"/><rect x="537.65" y="120" width="0.9" height="2.2" fill="#dcdee1"/><rect x="544.25" y="118.8" width="0.9" height="5" fill="#cdd0d4"/><rect x="550.85" y="120" width="0.9" height="2.2" fill="#dcdee1"/><rect x="557.45" y="120" width="0.9" height="2.2" fill="#dcdee1"/><rect x="564.05" y="120" width="0.9" height="2.2" fill="#dcdee1"/><rect x="577.25" y="120" width="0.9" height="2.2" fill="#dcdee1"/><rect x="583.85" y="120" width="0.9" height="2.2" fill="#dcdee1"/><rect x="590.45" y="120" width="0.9" height="2.2" fill="#dcdee1"/><rect x="597.05" y="118.8" width="0.9" height="5" fill="#cdd0d4"/><rect x="603.65" y="120" width="0.9" height="2.2" fill="#dcdee1"/><rect x="610.25" y="120" width="0.9" height="2.2" fill="#dcdee1"/><rect x="616.85" y="120" width="0.9" height="2.2" fill="#dcdee1"/><rect x="630.05" y="120" width="0.9" height="2.2" fill="#dcdee1"/><rect x="636.65" y="120" width="0.9" height="2.2" fill="#dcdee1"/><rect x="643.25" y="120" width="0.9" height="2.2" fill="#dcdee1"/><rect x="649.85" y="118.8" width="0.9" height="5" fill="#cdd0d4"/><rect x="656.45" y="120" width="0.9" height="2.2" fill="#dcdee1"/><rect x="663.05" y="120" width="0.9" height="2.2" fill="#dcdee1"/><rect x="669.65" y="120" width="0.9" height="2.2" fill="#dcdee1"/><rect x="682.85" y="120" width="0.9" height="2.2" fill="#dcdee1"/><rect x="689.45" y="120" width="0.9" height="2.2" fill="#dcdee1"/><rect x="696.05" y="120" width="0.9" height="2.2" fill="#dcdee1"/><rect x="702.65" y="118.8" width="0.9" height="5" fill="#cdd0d4"/><rect x="709.25" y="120" width="0.9" height="2.2" fill="#dcdee1"/><rect x="715.85" y="120" width="0.9" height="2.2" fill="#dcdee1"/><rect x="722.45" y="120" width="0.9" height="2.2" fill="#dcdee1"/><rect x="735.65" y="120" width="0.9" height="2.2" fill="#dcdee1"/><rect x="742.25" y="120" width="0.9" height="2.2" fill="#dcdee1"/><rect x="748.85" y="120" width="0.9" height="2.2" fill="#dcdee1"/><rect x="755.45" y="118.8" width="0.9" height="5" fill="#cdd0d4"/><rect x="762.05" y="120" width="0.9" height="2.2" fill="#dcdee1"/><rect x="768.65" y="120" width="0.9" height="2.2" fill="#dcdee1"/><rect x="775.25" y="120" width="0.9" height="2.2" fill="#dcdee1"/><rect x="788.45" y="120" width="0.9" height="2.2" fill="#dcdee1"/><rect x="795.05" y="120" width="0.9" height="2.2" fill="#dcdee1"/><rect x="801.65" y="120" width="0.9" height="2.2" fill="#dcdee1"/><rect x="808.25" y="118.8" width="0.9" height="5" fill="#cdd0d4"/><rect x="814.85" y="120" width="0.9" height="2.2" fill="#dcdee1"/><rect x="821.45" y="120" width="0.9" height="2.2" fill="#dcdee1"/><rect x="828.05" y="120" width="0.9" height="2.2" fill="#dcdee1"/><rect x="150" y="143.65" width="2.2" height="0.9" fill="#dcdee1"/><rect x="150" y="150.25" width="2.2" height="0.9" fill="#dcdee1"/><rect x="150" y="156.85" width="2.2" height="0.9" fill="#dcdee1"/><rect x="148.6" y="163.45" width="5" height="0.9" fill="#cdd0d4"/><rect x="150" y="170.05" width="2.2" height="0.9" fill="#dcdee1"/><rect x="150" y="176.65" width="2.2" height="0.9" fill="#dcdee1"/><rect x="150" y="183.25" width="2.2" height="0.9" fill="#dcdee1"/><rect x="150" y="196.45" width="2.2" height="0.9" fill="#dcdee1"/><rect x="150" y="203.05" width="2.2" height="0.9" fill="#dcdee1"/><rect x="150" y="209.65" width="2.2" height="0.9" fill="#dcdee1"/><rect x="148.6" y="216.25" width="5" height="0.9" fill="#cdd0d4"/><rect x="150" y="222.85" width="2.2" height="0.9" fill="#dcdee1"/><rect x="150" y="229.45" width="2.2" height="0.9" fill="#dcdee1"/><rect x="150" y="236.05" width="2.2" height="0.9" fill="#dcdee1"/><rect x="150" y="249.25" width="2.2" height="0.9" fill="#dcdee1"/><rect x="150" y="255.85" width="2.2" height="0.9" fill="#dcdee1"/><rect x="150" y="262.45" width="2.2" height="0.9" fill="#dcdee1"/><rect x="148.6" y="269.05" width="5" height="0.9" fill="#cdd0d4"/><rect x="150" y="275.65" width="2.2" height="0.9" fill="#dcdee1"/><rect x="150" y="282.25" width="2.2" height="0.9" fill="#dcdee1"/><rect x="150" y="288.85" width="2.2" height="0.9" fill="#dcdee1"/><rect x="150" y="302.05" width="2.2" height="0.9" fill="#dcdee1"/><rect x="150" y="308.65" width="2.2" height="0.9" fill="#dcdee1"/><rect x="150" y="315.25" width="2.2" height="0.9" fill="#dcdee1"/><rect x="148.6" y="321.85" width="5" height="0.9" fill="#cdd0d4"/><rect x="150" y="328.45" width="2.2" height="0.9" fill="#dcdee1"/><rect x="150" y="335.05" width="2.2" height="0.9" fill="#dcdee1"/><rect x="150" y="341.65" width="2.2" height="0.9" fill="#dcdee1"/><rect x="150" y="354.85" width="2.2" height="0.9" fill="#dcdee1"/><rect x="150" y="361.45" width="2.2" height="0.9" fill="#dcdee1"/><rect x="150" y="368.05" width="2.2" height="0.9" fill="#dcdee1"/><rect x="148.6" y="374.65" width="5" height="0.9" fill="#cdd0d4"/><rect x="150" y="381.25" width="2.2" height="0.9" fill="#dcdee1"/><rect x="150" y="387.85" width="2.2" height="0.9" fill="#dcdee1"/><rect x="150" y="394.45" width="2.2" height="0.9" fill="#dcdee1"/><rect x="150" y="407.65" width="2.2" height="0.9" fill="#dcdee1"/><rect x="150" y="414.25" width="2.2" height="0.9" fill="#dcdee1"/><rect x="150" y="420.85" width="2.2" height="0.9" fill="#dcdee1"/><rect x="148.6" y="427.45" width="5" height="0.9" fill="#cdd0d4"/><rect x="150" y="434.05" width="2.2" height="0.9" fill="#dcdee1"/></svg>
<div class="t" style="left:358.10px;top:118.17px;font-size:6.4px;color:#70757a;">1</div>
<div class="t" style="left:410.90px;top:118.17px;font-size:6.4px;color:#70757a;">2</div>
<div class="t" style="left:463.70px;top:118.17px;font-size:6.4px;color:#70757a;">3</div>
<div class="t" style="left:516.50px;top:118.17px;font-size:6.4px;color:#70757a;">4</div>
<div class="t" style="left:569.30px;top:118.17px;font-size:6.4px;color:#70757a;">5</div>
<div class="t" style="left:622.10px;top:118.17px;font-size:6.4px;color:#70757a;">6</div>
<div class="t" style="left:674.90px;top:118.17px;font-size:6.4px;color:#70757a;">7</div>
<div class="t" style="left:727.70px;top:118.17px;font-size:6.4px;color:#70757a;">8</div>
<div class="t" style="left:780.50px;top:118.17px;font-size:6.4px;color:#70757a;">9</div>
<div class="t" style="left:147.9px;top:187.10px;width:6.4px;height:6.4px;font-size:6.4px;color:#70757a;transform:rotate(-90deg);text-align:center;line-height:6.4px">1</div>
<div class="t" style="left:147.9px;top:239.90px;width:6.4px;height:6.4px;font-size:6.4px;color:#70757a;transform:rotate(-90deg);text-align:center;line-height:6.4px">2</div>
<div class="t" style="left:147.9px;top:292.70px;width:6.4px;height:6.4px;font-size:6.4px;color:#70757a;transform:rotate(-90deg);text-align:center;line-height:6.4px">3</div>
<div class="t" style="left:147.9px;top:345.50px;width:6.4px;height:6.4px;font-size:6.4px;color:#70757a;transform:rotate(-90deg);text-align:center;line-height:6.4px">4</div>
<div class="t" style="left:147.9px;top:398.30px;width:6.4px;height:6.4px;font-size:6.4px;color:#70757a;transform:rotate(-90deg);text-align:center;line-height:6.4px">5</div>
<div class="a" style="left:306.4px;top:137px;width:530.2px;height:299px;background:#fff;border:1px solid #dcdee1;box-shadow:0 0.5px 1.5px rgba(60,64,67,.18)"></div>
<svg style="left:343.7px;top:184.8px;" width="29" height="29" viewBox="0 0 29 29"><path d="M0,0 H29 V28.8 A29,28.8 0 0 1 0,0 Z" fill="#e6e6e6"/><path d="M11.4,0 H29 V17.4 A17.6,17.4 0 0 1 11.4,0 Z" fill="#cfd1d0"/></svg>
<div class="t" style="left:388.80px;top:182.22px;font-size:19px;color:#383838;transform:scaleX(1.0292);transform-origin:0 0;font-weight:700;">Flag</div>
<div class="a" style="left:372.6px;top:202.3px;width:73.3px;height:10.3px;background:#fff;border:1px solid #dcdcdc"></div>
<div class="t" style="left:377.60px;top:208.18px;font-size:2.3px;color:#888;transform:scaleX(1.0512);transform-origin:0 0;">Click to add text</div>
<div class="a" style="left:530.2px;top:176.2px;width:237px;height:197.2px;background:#f7f7f7;"></div>
<svg style="left:0px;top:0px;" width="1024" height="576" viewBox="0 0 1024 576"><path d="M539.1,203.2 H739.2 L726.2,289.3 Z" fill="#ec1c24"/><path d="M745.6,199.5 L750.8,199.5 L731.5,358 L722.2,359.8 Z" fill="#000"/><path d="M743.4,190 L750.4,187.4 L757.7,190.6 L758.8,197.3 L750.4,201.6 L743.1,199 Z" fill="#000"/></svg>
<svg style="left:0px;top:0px;" width="1024" height="576" viewBox="0 0 1024 576"><rect x="530.2" y="176.2" width="237" height="197.2" fill="none" stroke="#7eaef8" stroke-width="1.3"/><path d="M649,160 V176.2" stroke="#7eaef8" stroke-width="1"/><circle cx="649" cy="160" r="2.3" fill="#1a73e8"/><rect x="527.8" y="173.8" width="4.8" height="4.8" fill="#1a73e8"/><rect x="527.8" y="272.3" width="4.8" height="4.8" fill="#1a73e8"/><rect x="527.8" y="371.0" width="4.8" height="4.8" fill="#1a73e8"/><rect x="646.5" y="173.8" width="4.8" height="4.8" fill="#1a73e8"/><rect x="646.5" y="371.0" width="4.8" height="4.8" fill="#1a73e8"/><rect x="764.8" y="173.8" width="4.8" height="4.8" fill="#1a73e8"/><rect x="764.8" y="272.3" width="4.8" height="4.8" fill="#1a73e8"/><rect x="764.8" y="371.0" width="4.8" height="4.8" fill="#1a73e8"/></svg>
<div class="a" style="left:147px;top:446.2px;width:840px;height:6.4px;background:#fff;border-top:1px solid #e3e5e8;border-bottom:1px solid #e3e5e8"></div>
<svg style="left:560px;top:448.4px;" width="14" height="2" viewBox="0 0 14 2"><circle cx="1.3" cy="1" r="0.75" fill="#bdc1c6"/><circle cx="6.7" cy="1" r="0.75" fill="#bdc1c6"/><circle cx="12.1" cy="1" r="0.75" fill="#bdc1c6"/></svg>
<div class="a" style="left:147px;top:452.6px;width:840px;height:53.4px;background:#fff;"></div>
<div class="t" style="left:157.60px;top:461.42px;font-size:10px;color:#202124;transform:scaleX(0.9725);transform-origin:0 0;">Click to add speaker notes</div>
<div class="a" style="left:908.6px;top:476.2px;width:67.6px;height:25.8px;background:#f8f9fa;border:1px solid #e0e2e5;border-radius:3px"></div>
<svg style="left:918px;top:482px;" width="12.4" height="14.4" viewBox="0 0 12.4 14.4"><path d="M1.4,0 H11 Q12.4,0 12.4,1.4 V10.4 Q12.4,11.8 11,11.8 H8.2 L6.2,14.2 L4.2,11.8 H1.4 Q0,11.8 0,10.4 V1.4 Q0,0 1.4,0 Z" fill="#f5b400"/><path d="M6.2,2.2 L7.3,4.8 L9.9,5.9 L7.3,7 L6.2,9.6 L5.1,7 L2.5,5.9 L5.1,4.8 Z" fill="#fff"/></svg>
<div class="t" style="left:937.60px;top:484.41px;font-size:9.4px;color:#5f6368;transform:scaleX(0.8534);transform-origin:0 0;">Explore</div>
<!-- side panel -->
<div class="a" style="left:986.6px;top:91px;width:37.4px;height:415.4px;background:#fff;border-left:1px solid #e3e5e8"></div>
<svg style="left:999.6px;top:103.2px;" width="13.2" height="13.2" viewBox="0 0 13.2 13.2"><rect x="0" y="0" width="13.2" height="13.2" rx="1.4" fill="#4285f4"/><rect x="10.2" y="3" width="3" height="7.2" fill="#fbbc04"/><rect x="3" y="10.2" width="7.2" height="3" fill="#34a853"/><path d="M0,10.2 H3 V13.2 H1.4 Q0,13.2 0,11.8 Z" fill="#188038"/><path d="M10.2,0 H11.8 Q13.2,0 13.2,1.4 V3 H10.2 Z" fill="#1967d2"/><path d="M10.2,10.2 H13.2 L10.2,13.2 Z" fill="#ea4335"/><rect x="3" y="3" width="7.2" height="7.2" fill="#fff"/></svg>
<div class="t" style="left:1003.20px;top:107.56px;font-size:4.8px;color:#4285f4;transform:scaleX(1.1612);transform-origin:0 0;font-weight:700;">31</div>
<svg style="left:999.6px;top:140.6px;" width="13.2" height="13.2" viewBox="0 0 13.2 13.2"><rect x="0" y="0" width="13.2" height="13.2" rx="1.6" fill="#fbbc04"/><path d="M6.6,3 A2.7,2.7 0 0 1 8.2,7.9 V8.8 H5 V7.9 A2.7,2.7 0 0 1 6.6,3 Z" fill="#fff"/><rect x="5.2" y="9.5" width="2.8" height="1" fill="#fff"/></svg>
<svg style="left:1000.0px;top:177.8px;" width="12.4" height="12.4" viewBox="0 0 12.4 12.4"><circle cx="6.2" cy="6.6" r="4.6" stroke="#1a73e8" stroke-width="1.9" fill="none"/><path d="M3.6,6.4 L5.6,8.4 L10.6,2.6" stroke="#fff" stroke-width="3.2" fill="none"/><path d="M3.9,6.5 L5.7,8.3 L10.4,2.9" stroke="#1a73e8" stroke-width="1.7" fill="none"/></svg>
<svg style="left:1000.0px;top:215.4px;" width="12.4" height="12.4" viewBox="0 0 12.4 12.4"><circle cx="6.2" cy="6.2" r="6.2" fill="#1a73e8"/><circle cx="6.2" cy="4.5" r="1.9" fill="#fff"/><path d="M2.6,9.4 Q2.6,7.2 6.2,7.2 Q9.8,7.2 9.8,9.4 Z" fill="#fff"/></svg>
<svg style="left:1001.8000000000001px;top:252.9px;" width="8.8" height="12.8" viewBox="0 0 8.8 12.8"><path d="M4.4,12.6 C3.8,10.2 0.2,7.6 0.2,4.4 A4.2,4.2 0 0 1 8.6,4.4 C8.6,7.6 5,10.2 4.4,12.6 Z" fill="#34a853"/><path d="M1.4,1.5 A4.2,4.2 0 0 1 4.4,0.2 V4.4 Z" fill="#1a73e8"/><path d="M4.4,0.2 A4.2,4.2 0 0 1 7.6,1.7 L4.4,4.4 Z" fill="#ea4335"/><path d="M1.4,1.5 L4.4,4.4 L0.8,6.6 A4.2,4.2 0 0 1 1.4,1.5 Z" fill="#fbbc04"/><path d="M7.6,1.7 A4.2,4.2 0 0 1 8.2,6.2 L4.4,4.4 Z" fill="#4285f4"/><circle cx="4.4" cy="4.4" r="1.5" fill="#fff"/></svg>
<div class="a" style="left:998.8px;top:287.8px;width:13.4px;height:0.8px;background:#dadce0;"></div>
<svg style="left:999.4px;top:311.6px;" width="13.6" height="13.6" viewBox="0 0 24 24"><path d="M19 13h-6v6h-2v-6H5v-2h6V5h2v6h6v2z" fill="#5f6368"/></svg>
<svg style="left:999.1px;top:481.2px;" width="13" height="13" viewBox="0 0 24 24"><path d="M10 6L8.590 7.410 13.170 12l-4.580 4.590L10 18l6-6z" fill="#444746"/></svg>
<!-- download shelf -->
<div class="a" style="left:0px;top:506px;width:1024px;height:38px;background:#fff;border-top:1px solid #dadce0"></div>
<svg style="left:14.8px;top:519.8px;" width="8" height="10.2" viewBox="0 0 8 10.2"><path d="M0.4,0.4 H5.4 L7.6,2.6 V9.8 H0.4 Z" fill="#fff" stroke="#9aa0a6" stroke-width="0.8"/><rect x="2" y="3.6" width="3.6" height="3.4" fill="#1a56c4"/><path d="M2,7 L3.4,5.2 L4.4,6.2 L5.6,7 Z" fill="#8ab4f8"/></svg>
<div class="t" style="left:33.00px;top:521.50px;font-size:9px;color:#3c4043;transform:scaleX(0.9492);transform-origin:0 0;">flag.png</div>
<svg style="left:135.5px;top:518.9px;" width="13" height="13" viewBox="0 0 24 24"><path d="M12 8l-6 6 1.410 1.410L12 10.830l4.590 4.580L18 14z" fill="#5f6368"/></svg>
<div class="a" style="left:157px;top:511px;width:1px;height:28.6px;background:#dadce0;"></div>
<div class="a" style="left:948.4px;top:514.2px;width:52.2px;height:21.4px;background:#fff;border:1px solid #dfe1e5;border-radius:3px"></div>
<div class="t" style="left:959.00px;top:521.20px;font-size:8.8px;color:#1a73e8;transform:scaleX(0.9199);transform-origin:0 0;">Show all</div>
<svg style="left:1006.8px;top:519.4px;" width="10.4" height="10.4" viewBox="0 0 24 24"><path d="M19 6.410L17.590 5 12 10.590 6.410 5 5 6.410 10.590 12 5 17.590 6.410 19 12 13.410 17.590 19 19 17.590 13.410 12z" fill="#3c4043"/></svg>
<!-- windows taskbar -->
<div class="a" style="left:0px;top:544px;width:1024px;height:32px;background:#dbdbdb;"></div>
<svg style="left:12.8px;top:553px;" width="15.2" height="14" viewBox="0 0 15.2 14"><rect x="0" y="0" width="15.2" height="14" rx="1.4" fill="#0f6fc6"/><rect x="1.4" y="1.4" width="5.6" height="11.2" fill="#fff"/><rect x="8.2" y="1.4" width="5.6" height="11.2" fill="#7cc3f2"/><rect x="8.2" y="1.4" width="5.6" height="4" fill="#a9dcfa"/></svg>
<svg style="left:343.5px;top:552.4px;" width="15.4" height="15.4" viewBox="0 0 15.4 15.4"><defs><linearGradient id="wg" x1="0" y1="0" x2="1" y2="1"><stop offset="0" stop-color="#4cc6f7"/><stop offset="1" stop-color="#0a74d2"/></linearGradient></defs><g fill="url(#wg)"><rect x="0" y="0" width="7.3" height="7.3" rx="0.5"/><rect x="8.1" y="0" width="7.3" height="7.3" rx="0.5"/><rect x="0" y="8.1" width="7.3" height="7.3" rx="0.5"/><rect x="8.1" y="8.1" width="7.3" height="7.3" rx="0.5"/></g></svg>
<svg style="left:373px;top:552.4px;" width="15" height="15" viewBox="0 0 15 15"><circle cx="8.8" cy="6.2" r="5" stroke="#1f1f1f" stroke-width="1.7" fill="#e6e6e6"/><path d="M5.2,10 L1.1,14.2" stroke="#1f1f1f" stroke-width="2" stroke-linecap="round"/></svg>
<svg style="left:402px;top:552.4px;" width="16.4" height="14.8" viewBox="0 0 16.4 14.8"><rect x="0" y="4.8" width="11.8" height="9.8" rx="0.8" fill="#232323"/><rect x="3.9" y="0" width="12.4" height="10.6" rx="1" fill="#fafafa" fill-opacity="0.78"/></svg>
<svg style="left:431.6px;top:552.6px;" width="15.6" height="15.4" viewBox="0 0 15.6 15.4"><defs><linearGradient id="cg" x1="0" y1="0" x2="1" y2="1"><stop offset="0" stop-color="#8f8ff0"/><stop offset="1" stop-color="#5a55c8"/></linearGradient></defs><path d="M7.9,0.2 A7.4,7.4 0 1 1 3.6,13.6 L0.4,15 L1.6,11.4 A7.4,7.4 0 0 1 7.9,0.2 Z" fill="url(#cg)"/><rect x="3.6" y="4.9" width="6.2" height="5.4" rx="1" fill="#fff"/><path d="M10.2,7 L12.6,5.4 V9.8 L10.2,8.2 Z" fill="#fff"/></svg>
<svg style="left:460.8px;top:552.2px;" width="16" height="16" viewBox="0 0 16 16"><defs><linearGradient id="eg1" x1="0" y1="0" x2="1" y2="1"><stop offset="0" stop-color="#2aa3e8"/><stop offset="1" stop-color="#0c4ea0"/></linearGradient><linearGradient id="eg2" x1="0" y1="1" x2="1" y2="0"><stop offset="0" stop-color="#1c9fd8"/><stop offset="0.6" stop-color="#3ec98a"/><stop offset="1" stop-color="#7cd64a"/></linearGradient></defs><circle cx="8" cy="8" r="7.8" fill="url(#eg1)"/><path d="M1.2,4.2 A7.8,7.8 0 0 1 15.8,8 Q15.8,11 12.6,11.4 Q10,11.4 10.4,9.2 Q11,6.2 8,5.6 Q3.6,5.2 1.2,4.2 Z" fill="url(#eg2)"/><path d="M1.2,4.2 Q4,3.6 7.6,4.4 Q11.4,5.4 10.4,9.2 Q10,11.4 12.6,11.4 Q10.6,14.2 7.4,13 Q4.2,11.4 5.2,8.2 Q5.8,6.4 8,5.6 Q3.8,5.2 1.2,4.2 Z" fill="#0f58ad" fill-opacity="0.55"/><path d="M5.2,8.2 Q6.2,6 8.4,6.2 Q10.6,6.8 10.4,9.2 Q10.2,10.8 11.6,11.3 Q9.2,12 7.4,10.8 Q6.2,9.8 6.8,8.2 Z" fill="#dbdbdb"/></svg>
<svg style="left:490.4px;top:553px;" width="16.6" height="14" viewBox="0 0 16.6 14"><path d="M0,1.4 Q0,0 1.4,0 H5 Q5.8,0 6.4,0.6 L7.6,1.8 H15.2 Q16.6,1.8 16.6,3.2 V5 H0 Z" fill="#e9a41a"/><rect x="0" y="3.4" width="16.6" height="10.6" rx="1.2" fill="#fdd35a"/><rect x="0" y="9.6" width="16.6" height="4.4" rx="1.2" fill="#f3b62c"/><path d="M4.2,14 V11.4 Q4.2,10.2 5.4,10.2 H11.2 Q12.4,10.2 12.4,11.4 V14 Z" fill="#2a7ad1"/><rect x="6.2" y="12" width="4.2" height="0.9" fill="#1756a0"/></svg>
<svg style="left:519.6px;top:552.4px;" width="15.4" height="15.2" viewBox="0 0 15.4 15.2"><path d="M4.6,3.4 V1.8 Q4.6,0.5 5.9,0.5 H9.5 Q10.8,0.5 10.8,1.8 V3.4" stroke="#5aaeee" stroke-width="1.2" fill="none"/><path d="M0,3.2 H15.4 V12.6 Q15.4,15.2 12.8,15.2 H2.6 Q0,15.2 0,12.600 Z" fill="#184988"/><rect x="0" y="3.2" width="15.4" height="2.8" fill="#2a6cc0"/><rect x="4.5" y="6.6" width="2.9" height="2.9" fill="#f25022"/><rect x="8" y="6.6" width="2.9" height="2.9" fill="#7fba00"/><rect x="4.5" y="10.1" width="2.9" height="2.900" fill="#00a4ef"/><rect x="8" y="10.1" width="2.9" height="2.9" fill="#ffb900"/></svg>
<svg style="left:548.8px;top:552.6px;" width="16.2" height="14.8" viewBox="0 0 16.2 14.8"><path d="M0,5.800 L8.1,0 L16.2,5.8 V8 H0 Z" fill="#1660b4"/><path d="M2.4,4.800 H13.8 L8.1,9.6 Z" fill="#fff"/><path d="M0,5.8 L8.1,10.8 L16.2,5.8 V13.400 Q16.2,14.8 14.8,14.8 H1.4 Q0,14.800 0,13.400 Z" fill="#3aa9f0"/><path d="M0,13.800 L8.1,9.600 L16.2,13.800 Q16,14.800 14.8,14.800 H1.4 Q0.2,14.800 0,13.800 Z" fill="#2489db"/></svg>
<svg style="left:578.2px;top:552px;" width="15.8" height="15.8" viewBox="0 0 15.8 15.8"><rect x="0" y="0" width="15.8" height="15.8" fill="#2aa7df"/><rect x="0" y="12.600" width="15.8" height="3.2" fill="#2092c8"/></svg>
<div class="t" style="left:582.30px;top:554.03px;font-size:11.6px;color:#0d3f8a;font-weight:700;">L</div>
<div class="t" style="left:583.30px;top:554.03px;font-size:11.6px;color:#fff;font-weight:700;">L</div>
<svg style="left:0px;top:0px;" width="1024" height="576" viewBox="0 0 1024 576"><path d="M607.9,551.9 L615.4,555.8 L622.7,551.9 V564.500 L615.4,568.2 L607.9,564.500 Z" fill="#c8262c"/><path d="M611.3,557.1 L615.4,558.9 L619.4,557.1 V562.600 L615.4,564.700 L611.3,562.600 Z" fill="#dbdbdb"/></svg>
<svg style="left:0px;top:0px;" width="1024" height="576" viewBox="0 0 1024 576"><defs><linearGradient id="og" x1="0" y1="0" x2="1" y2="0"><stop offset="0" stop-color="#b8202c"/><stop offset="0.55" stop-color="#d6341c"/><stop offset="0.62" stop-color="#ea5a1c"/><stop offset="1" stop-color="#ee6a1e"/></linearGradient></defs><path d="M644.9,551.800 L651.100,554.400 V565.200 L644.900,567.800 L638.500,563.400 V555.900 Z" fill="url(#og)"/><path d="M641.8,556.400 L646.200,555.300 V564 L641.800,563.200 Z" fill="#dbdbdb"/></svg>
<div class="a" style="left:661px;top:547.2px;width:25.8px;height:25.8px;background:#eeeeee;border-radius:3px"></div>
<svg style="left:666.2px;top:552.2px;" width="15.2" height="15.2" viewBox="0 0 15.2 15.2"><circle cx="7.6" cy="7.6" r="7.6" fill="#fff"/><path d="M7.6,7.6 L1.02,3.8 A7.6,7.6 0 0 1 14.18,3.8 Z" fill="#ea4335"/><path d="M7.6,7.6 L14.18,3.8 A7.6,7.6 0 0 1 7.6,15.2 Z" fill="#fbbc04"/><path d="M7.6,7.6 L7.6,15.2 A7.6,7.6 0 0 1 1.02,3.8 Z" fill="#34a853"/><circle cx="7.6" cy="7.6" r="3.5" fill="#fff"/><circle cx="7.6" cy="7.6" r="2.7" fill="#4285f4"/></svg>
<div class="a" style="left:669px;top:570.8px;width:10px;height:1.5px;background:#0a66c2;border-radius:1px"></div>
<svg style="left:822.4px;top:557.6px;" width="8.4" height="4.8" viewBox="0 0 8.4 4.8"><path d="M0.5,4.4 L4.2,0.7 L7.9,4.4" stroke="#1f1f1f" stroke-width="1" fill="none"/></svg>
<svg style="left:836.8px;top:555.6px;" width="11.6" height="8" viewBox="0 0 11.6 8"><path d="M3,7.500 A2.500,2.500 0 0 1 2.700,2.600 A3.300,3.300 0 0 1 8.800,2.900 A2.300,2.300 0 0 1 9,7.500 Z" stroke="#2b2b2b" stroke-width="0.9" fill="#e6e6e6"/></svg>
<svg style="left:853.2px;top:555.2px;" width="10.4" height="10.4" viewBox="0 0 10.4 10.4"><g fill="#1f1f1f"><path d="M3,0 L4.900,1.400 L3,2.800 L1.100,1.400 Z"/><path d="M7.600,0 L9.500,1.400 L7.600,2.800 L5.700,1.400 Z"/><path d="M7.600,3.400 L9.500,4.800 L7.600,6.200 L5.700,4.800 Z"/><path d="M5.300,6 L6.900,7.200 L5.300,8.400 Z"/></g><rect x="0.200" y="4" width="5.700" height="5.700" rx="0.600" fill="#e3262e"/></svg>
<div class="t" style="left:854.90px;top:559.95px;font-size:4.6px;color:#fff;font-weight:700;">S</div>
<div class="t" style="left:873.80px;top:551.35px;font-size:8.3px;color:#1f1f1f;transform:scaleX(0.8562);transform-origin:0 0;">ENG</div>
<div class="t" style="left:878.20px;top:561.85px;font-size:8.3px;color:#1f1f1f;transform:scaleX(0.8193);transform-origin:0 0;">IN</div>
<svg style="left:900.4px;top:556px;" width="11.6" height="8.4" viewBox="0 0 11.6 8.4"><path d="M0.6,3 A7.6,7.6 0 0 1 11,3" stroke="#1f1f1f" stroke-width="0.9" fill="none"/><path d="M2.3,4.8 A5.2,5.2 0 0 1 9.3,4.8" stroke="#1f1f1f" stroke-width="0.9" fill="none"/><path d="M4,6.5 A2.8,2.8 0 0 1 7.6,6.5" stroke="#1f1f1f" stroke-width="0.9" fill="none"/><circle cx="5.8" cy="7.8" r="0.7" fill="#1f1f1f"/></svg>
<svg style="left:916.8px;top:555.8px;" width="11.6" height="8.8" viewBox="0 0 11.6 8.8"><path d="M0.5,3 H2.4 L5,0.8 V8 L2.4,5.8 H0.5 Z" stroke="#1f1f1f" stroke-width="0.85" fill="none" stroke-linejoin="round"/><path d="M6.6,2.8 Q7.8,4.4 6.6,6" stroke="#1f1f1f" stroke-width="0.85" fill="none"/><path d="M8.2,1.6 Q10.2,4.4 8.2,7.2" stroke="#1f1f1f" stroke-width="0.85" fill="none"/><path d="M9.8,0.6 Q12.4,4.4 9.8,8.2" stroke="#1f1f1f" stroke-width="0.85" fill="none"/></svg>
<svg style="left:933.4px;top:557.2px;" width="11.4" height="6.4" viewBox="0 0 11.4 6.4"><rect x="0.5" y="0.5" width="9" height="5.4" rx="1.2" stroke="#1f1f1f" stroke-width="0.9" fill="none"/><rect x="1.7" y="1.7" width="3.8" height="3" rx="0.5" fill="#1f1f1f"/><path d="M10.4,2.2 V4.2" stroke="#1f1f1f" stroke-width="1" stroke-linecap="round"/></svg>
<div class="t" style="left:979.70px;top:550.75px;font-size:8.3px;color:#1f1f1f;transform:scaleX(0.7799);transform-origin:0 0;">21:41</div>
<div class="t" style="left:954.00px;top:561.25px;font-size:8.3px;color:#1f1f1f;transform:scaleX(0.9868);transform-origin:0 0;">07-04-2022</div>
<div class="a" style="left:1000.2px;top:555px;width:11px;height:11px;background:#0a6cc9;border-radius:50%"></div>
<div class="t" style="left:1003.90px;top:557.38px;font-size:6.6px;color:#fff;">3</div>
</body></html>
